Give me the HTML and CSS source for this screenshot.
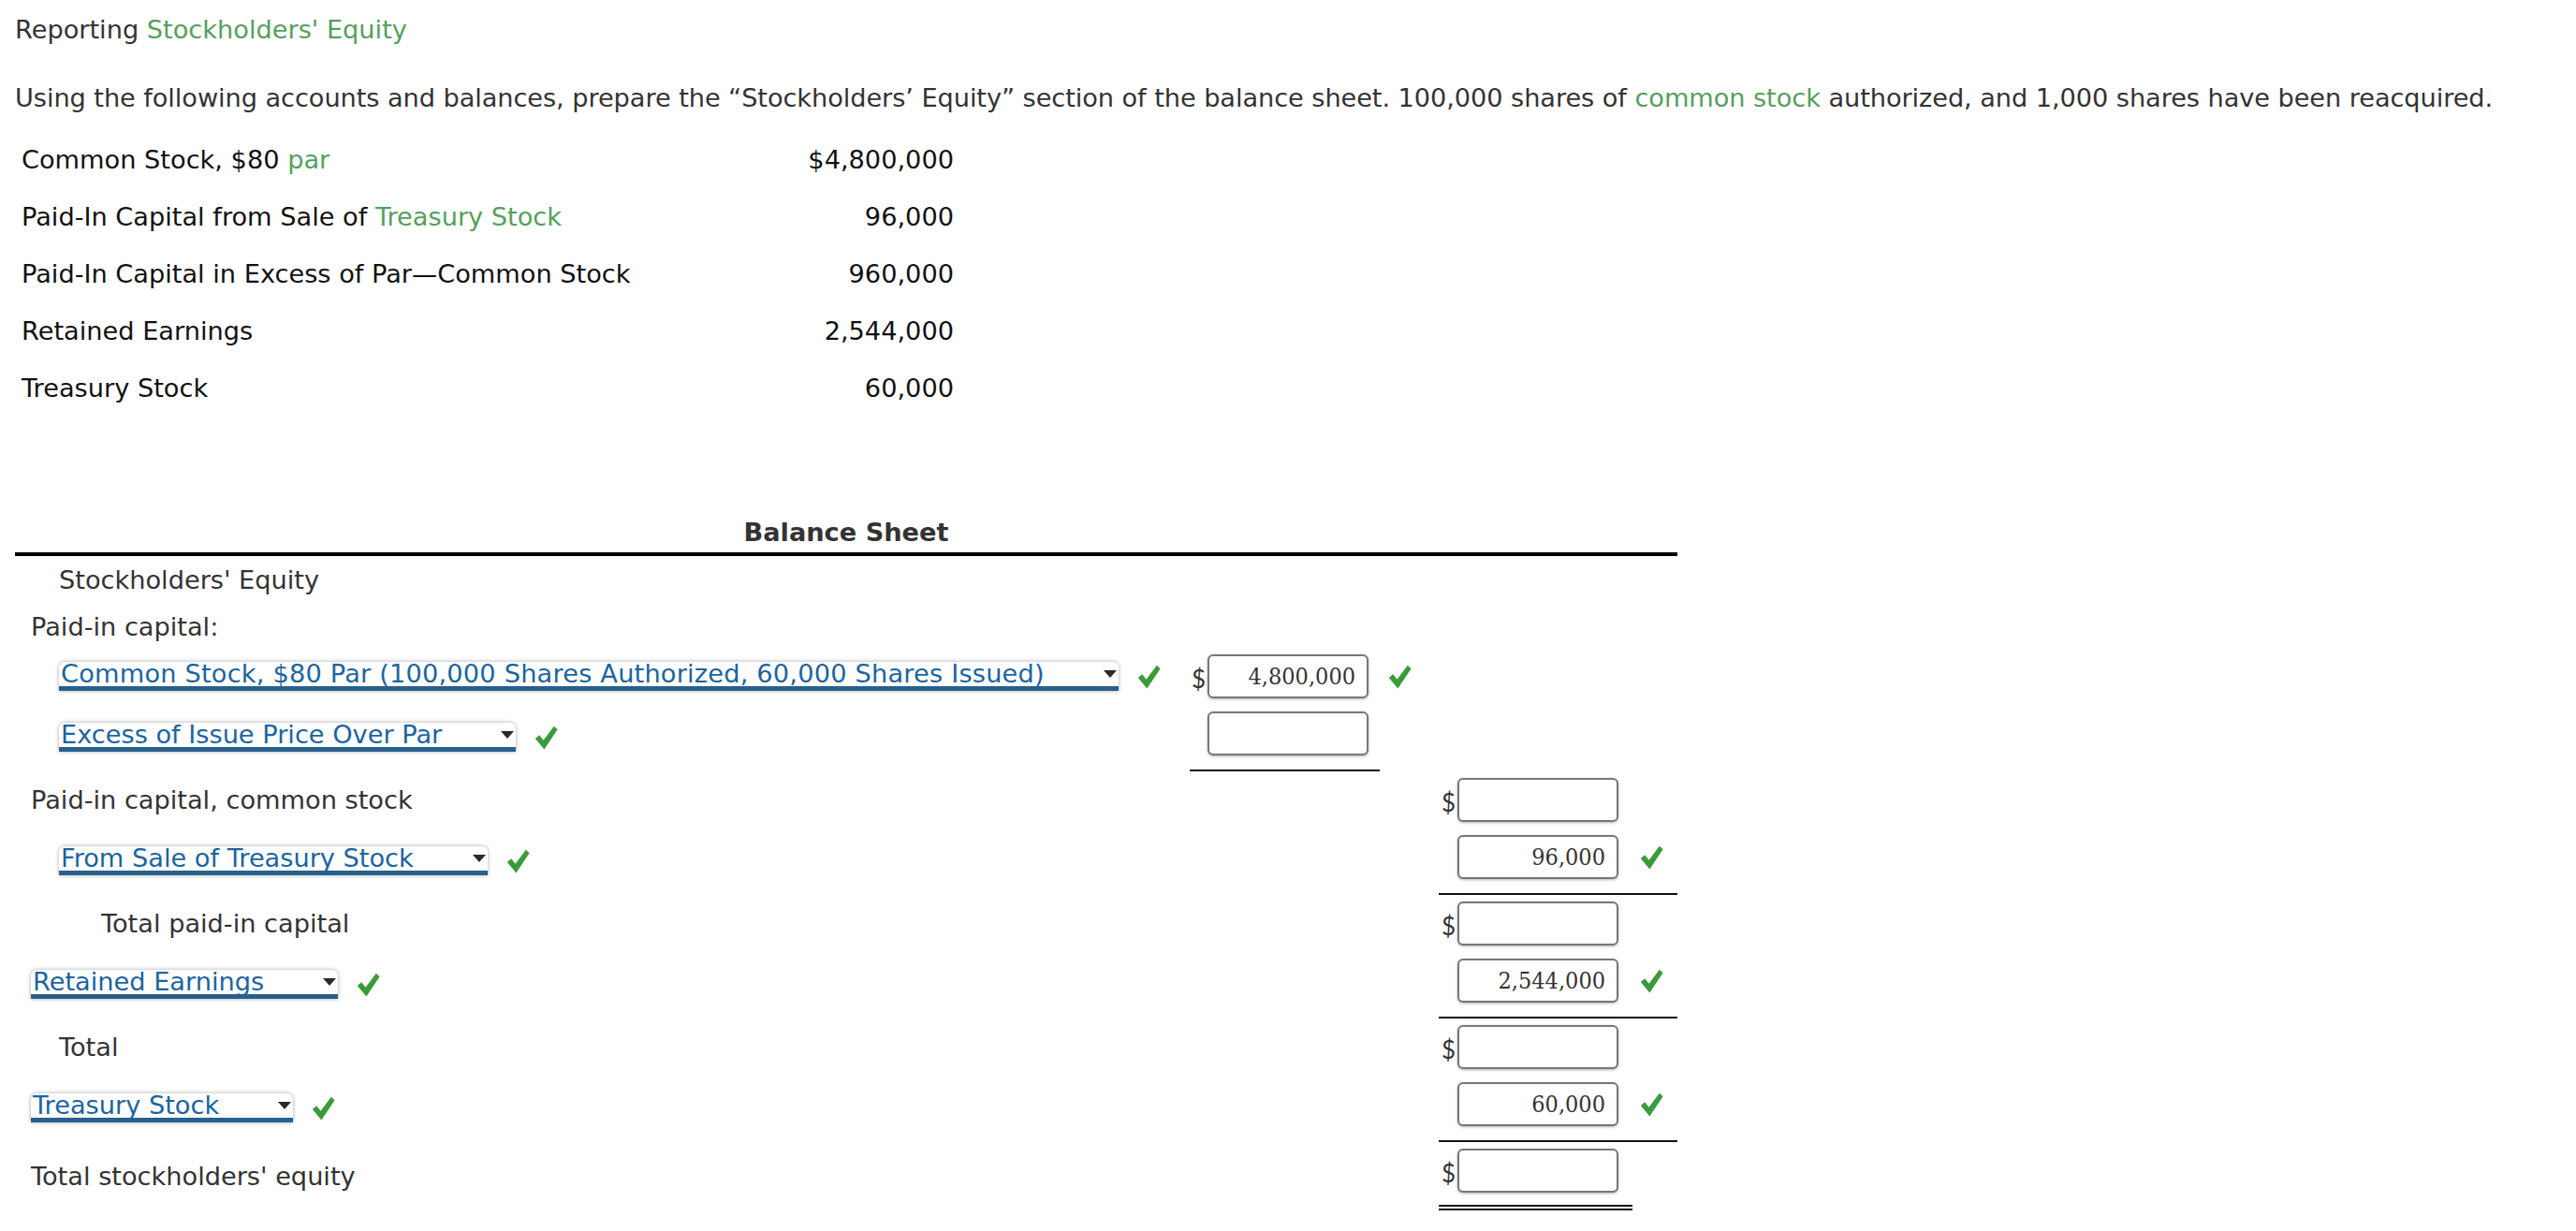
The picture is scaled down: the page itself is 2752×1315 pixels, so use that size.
FILE: index.html
```html
<!DOCTYPE html>
<html lang="en">
<head>
<meta charset="utf-8">
<title>Reporting Stockholders' Equity</title>
<link rel="stylesheet" href="styles.css">
</head>
<body>
<div class="page">
  <p class="title">Reporting <span class="term">Stockholders' Equity</span></p>
  <p class="intro">Using the following accounts and balances, prepare the “Stockholders’ Equity” section of the balance sheet. 100,000 shares of <span class="term">common stock</span> authorized, and 1,000 shares have been reacquired.</p>

  <div class="accounts">
    <div class="acct"><span>Common Stock, $80 <span class="term">par</span></span><span>$4,800,000</span></div>
    <div class="acct"><span>Paid-In Capital from Sale of <span class="term">Treasury Stock</span></span><span>96,000</span></div>
    <div class="acct"><span>Paid-In Capital in Excess of Par—Common Stock</span><span>960,000</span></div>
    <div class="acct"><span>Retained Earnings</span><span>2,544,000</span></div>
    <div class="acct"><span>Treasury Stock</span><span>60,000</span></div>
  </div>

  <div class="bs">
    <div class="bs-title">Balance Sheet</div>
    <div class="bs-head se">Stockholders' Equity</div>
    <div class="bs-head pic">Paid-in capital:</div>

    <div class="row">
      <div class="lbl i1"><span class="sel"><span class="sel-text wide">Common Stock, $80 Par (100,000 Shares Authorized, 60,000 Shares Issued)</span><span class="arrow"></span></span><svg class="chk after" viewBox="0 0 25 26"><path d="M0.8 14 L5.2 10.2 L9.6 15.8 L20.8 0.8 L24.6 4.2 L10.4 25.4 Z"/></svg></div>
      <div class="v v1"><span class="cur">$</span><input class="box" type="text" value="4,800,000" readonly></div>
      <div class="c c1"><svg class="chk" viewBox="0 0 25 26"><path d="M0.8 14 L5.2 10.2 L9.6 15.8 L20.8 0.8 L24.6 4.2 L10.4 25.4 Z"/></svg></div>
      <div class="v v2"></div>
      <div class="c c2"></div>
    </div>

    <div class="row ul">
      <div class="lbl i1"><span class="sel"><span class="sel-text">Excess of Issue Price Over Par</span><span class="arrow"></span></span><svg class="chk after" viewBox="0 0 25 26"><path d="M0.8 14 L5.2 10.2 L9.6 15.8 L20.8 0.8 L24.6 4.2 L10.4 25.4 Z"/></svg></div>
      <div class="v v1 line"><span class="cur"></span><input class="box" type="text" value="" readonly></div>
      <div class="c c1"></div>
      <div class="v v2"></div>
      <div class="c c2"></div>
    </div>

    <div class="row">
      <div class="lbl">Paid-in capital, common stock</div>
      <div class="v v1"></div>
      <div class="c c1"></div>
      <div class="v v2"><span class="cur">$</span><input class="box" type="text" value="" readonly></div>
      <div class="c c2"></div>
    </div>

    <div class="row ul">
      <div class="lbl i1"><span class="sel"><span class="sel-text">From Sale of Treasury Stock</span><span class="arrow"></span></span><svg class="chk after" viewBox="0 0 25 26"><path d="M0.8 14 L5.2 10.2 L9.6 15.8 L20.8 0.8 L24.6 4.2 L10.4 25.4 Z"/></svg></div>
      <div class="v v1"></div>
      <div class="c c1"></div>
      <div class="v v2 line"><span class="cur"></span><input class="box" type="text" value="96,000" readonly></div>
      <div class="c c2 line"><svg class="chk" viewBox="0 0 25 26"><path d="M0.8 14 L5.2 10.2 L9.6 15.8 L20.8 0.8 L24.6 4.2 L10.4 25.4 Z"/></svg></div>
    </div>

    <div class="row">
      <div class="lbl i2">Total paid-in capital</div>
      <div class="v v1"></div>
      <div class="c c1"></div>
      <div class="v v2"><span class="cur">$</span><input class="box" type="text" value="" readonly></div>
      <div class="c c2"></div>
    </div>

    <div class="row ul">
      <div class="lbl"><span class="sel"><span class="sel-text">Retained Earnings</span><span class="arrow"></span></span><svg class="chk after" viewBox="0 0 25 26"><path d="M0.8 14 L5.2 10.2 L9.6 15.8 L20.8 0.8 L24.6 4.2 L10.4 25.4 Z"/></svg></div>
      <div class="v v1"></div>
      <div class="c c1"></div>
      <div class="v v2 line"><span class="cur"></span><input class="box" type="text" value="2,544,000" readonly></div>
      <div class="c c2 line"><svg class="chk" viewBox="0 0 25 26"><path d="M0.8 14 L5.2 10.2 L9.6 15.8 L20.8 0.8 L24.6 4.2 L10.4 25.4 Z"/></svg></div>
    </div>

    <div class="row">
      <div class="lbl i1">Total</div>
      <div class="v v1"></div>
      <div class="c c1"></div>
      <div class="v v2"><span class="cur">$</span><input class="box" type="text" value="" readonly></div>
      <div class="c c2"></div>
    </div>

    <div class="row ul">
      <div class="lbl"><span class="sel"><span class="sel-text">Treasury Stock</span><span class="arrow"></span></span><svg class="chk after" viewBox="0 0 25 26"><path d="M0.8 14 L5.2 10.2 L9.6 15.8 L20.8 0.8 L24.6 4.2 L10.4 25.4 Z"/></svg></div>
      <div class="v v1"></div>
      <div class="c c1"></div>
      <div class="v v2 line"><span class="cur"></span><input class="box" type="text" value="60,000" readonly></div>
      <div class="c c2 line"><svg class="chk" viewBox="0 0 25 26"><path d="M0.8 14 L5.2 10.2 L9.6 15.8 L20.8 0.8 L24.6 4.2 L10.4 25.4 Z"/></svg></div>
    </div>

    <div class="row dbl">
      <div class="lbl">Total stockholders' equity</div>
      <div class="v v1"></div>
      <div class="c c1"></div>
      <div class="v v2 line"><span class="cur">$</span><input class="box" type="text" value="" readonly></div>
      <div class="c c2"></div>
    </div>
  </div>
</div>
</body>
</html>
```

FILE: styles.css
```css
html, body {
  margin: 0;
  padding: 0;
  background: #ffffff;
}

body {
  font-family: "DejaVu Sans", Verdana, sans-serif;
  font-size: 27.2px;
  line-height: 32px;
  color: #333333;
}

.page {
  padding: 16px 16px 0 16px;
}

p {
  margin: 0;
}

.term {
  color: #55a05c;
}

.intro {
  margin-top: 40.5px;
  letter-spacing: -0.07px;
}

/* account list */
.accounts {
  margin: 19.5px 0 0 7px;
  width: 996px;
}

.acct {
  display: flex;
  justify-content: space-between;
  align-items: center;
  height: 61px;
  color: #111111;
}

/* balance sheet */
.bs {
  width: 1776px;
  margin-top: 108px;
}

.bs-title {
  text-align: center;
  font-weight: bold;
  padding-bottom: 5px;
  border-bottom: 4px solid #000000;
}

.bs-head {
  padding-left: 17px;
}

.bs-head.se {
  padding: 10px 0 9px 47px;
}

.bs-head.pic {
  padding: 9px 0 6px 17px;
}

.row {
  display: grid;
  grid-template-columns: 1255px 203px 63px 207px 48px;
}

.row > div {
  display: flex;
  align-items: center;
  padding-top: 7px;
  padding-bottom: 7px;
  min-height: 47px;
}

.row.ul > div {
  padding-bottom: 15px;
  border-bottom: 2px solid transparent;
}

.row.ul > div.lbl {
  padding-top: 11px;
  padding-bottom: 11px;
}

.row.ul > div.line {
  border-bottom-color: #111111;
}

.row.dbl > div {
  padding-bottom: 13px;
  border-bottom: 6px double transparent;
}

.row.dbl > div.lbl {
  padding-top: 13px;
  padding-bottom: 7px;
}

.row.dbl > div.line {
  border-bottom-color: #111111;
}

.lbl {
  padding-left: 17px;
  white-space: nowrap;
}

.lbl.i1 {
  padding-left: 47px;
}

.lbl.i2 {
  padding-left: 92px;
}

/* dropdowns */
.sel {
  display: inline-flex;
  align-items: center;
  height: 26px;
  background: #ffffff;
  border-radius: 6px 6px 0 0;
  box-shadow: 0 0 4px rgba(0, 0, 0, 0.35);
  border-bottom: 5px solid #285f8c;
}

.sel-text {
  color: #1b64a0;
  line-height: 26px;
  padding-left: 2px;
}

.sel-text.wide {
  letter-spacing: 0.2px;
}

.arrow {
  width: 0;
  height: 0;
  border-left: 7px solid transparent;
  border-right: 7px solid transparent;
  border-top: 8px solid #2a2a2a;
  margin-left: 63px;
  margin-right: 2px;
}

/* checks */
.chk {
  width: 25px;
  height: 26px;
  fill: #3a9b3a;
  flex: none;
}

.chk.after {
  margin-left: 20px;
}

.c1 {
  padding-left: 9px;
}

.c2 {
  padding-left: 8px;
}

/* value cells */
.v1 {
  padding-left: 2px;
}

.v2 {
  padding-left: 3px;
}

.cur {
  width: 17px;
  flex: none;
  font-family: Lato, "DejaVu Sans", sans-serif;
  font-size: 26px;
  color: #333333;
  position: relative;
  top: 2px;
}

.box {
  box-sizing: border-box;
  width: 172px;
  height: 47px;
  margin: 0;
  border: 2px solid #777777;
  border-radius: 6px;
  box-shadow: 0 1px 3px rgba(0, 0, 0, 0.3);
  background: #ffffff;
  padding: 0 12px 0 4px;
  text-align: right;
  font-family: "DejaVu Serif Condensed", "DejaVu Serif", serif;
  font-stretch: condensed;
  font-size: 25px;
  color: #333333;
  outline: none;
}
```
